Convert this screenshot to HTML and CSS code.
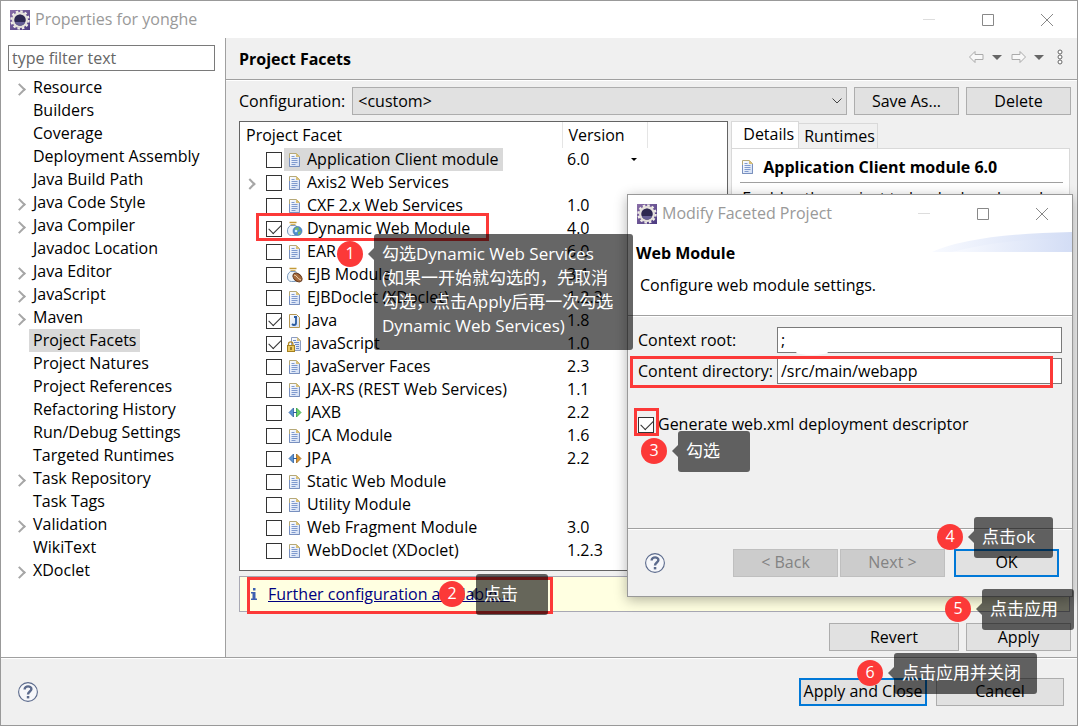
FILE: index.html
```
<!DOCTYPE html>
<html lang="zh-CN">
<head>
	<meta charset="utf-8">
	<title>Properties for yonghe</title>
	<link rel="stylesheet" href="styles.css">
</head>
<body>
	<!-- shared icons -->
	<svg class="sprite" aria-hidden="true">
		<defs>
			<linearGradient id="gPurple" x1="0" y1="0" x2="1" y2="1"><stop offset="0" stop-color="#8a6fa8"/><stop offset="1" stop-color="#4b3a80"/></linearGradient>
			<linearGradient id="gPaper" x1="0" y1="0" x2="1" y2="1"><stop offset="0" stop-color="#fff"/><stop offset="1" stop-color="#cfdcf3"/></linearGradient>
			<linearGradient id="gWave" x1="0" y1="0" x2="1" y2="0"><stop offset="0" stop-color="#f8faff"/><stop offset="1" stop-color="#d3ddf5"/></linearGradient>
		</defs>
		<symbol id="eclipse" viewBox="0 0 20 20">
			<rect width="20" height="20" fill="url(#gPurple)"/>
			<circle cx="10" cy="10" r="8.6" fill="none" stroke="#f1eee8" stroke-width="2.2" stroke-dasharray="2.5 2"/>
			<circle cx="10" cy="10" r="6.8" fill="none" stroke="#e6e2dc" stroke-width="2.400"/>
			<circle cx="10" cy="10" r="5.600" fill="#2d2850"/>
			<path d="M4.800 12h10.400a5.600 5.600 0 0 1-10.400 0z" fill="#665f95"/>
		</symbol>
		<symbol id="doc" viewBox="0 0 16 16">
			<path d="M2.5 1.5h7l3 3v10h-10z" fill="url(#gPaper)" stroke="#b5a878"/>
			<path d="M2.5 6v8.5h10V5" fill="none" stroke="#7890c0"/>
			<path d="M9 1l4 4H9z" fill="#d8bf78"/>
			<path d="M4.500 4.500h3M4.500 6.500h6M4.500 8.500h6M4.500 10.500h6M4.500 12.500h4" stroke="#7f9ace"/>
		</symbol>
		<symbol id="jarweb" viewBox="0 0 16 16">
			<path d="M2.500 1.500h7M3.500 4h5" stroke="#c49a37" stroke-width="1.600"/>
			<path d="M3.500 4.500C1 6 .5 8 .5 10c0 3 1.500 4.500 4 4.500h4c2-1 3-3 3-5 0-2-1-4-3-5z" fill="#edf4fb" stroke="#7d9cbe"/>
			<circle cx="10.500" cy="10" r="4.500" fill="#4d8fce" stroke="#3a6da4" stroke-width=".6"/>
			<path d="M8 7l3-1 1 2-2 2-2-1zM11 11l3-1-1 3-2 1z" fill="#74b965"/>
			<circle cx="9" cy="10" r="1.300" fill="#d6ecfa"/>
		</symbol>
		<symbol id="jarbean" viewBox="0 0 16 16">
			<path d="M2.500 1.500h7M3.500 4h5" stroke="#c49a37" stroke-width="1.600"/>
			<path d="M3.500 4.500C1 6 .5 8 .5 10c0 3 1.500 4.500 4 4.500h4c2-1 3-3 3-5 0-2-1-4-3-5z" fill="#edf4fb" stroke="#7d9cbe"/>
			<ellipse cx="10.500" cy="10.500" rx="5.200" ry="3.600" transform="rotate(42 10.500 10.500)" fill="#a56a3c" stroke="#5f351a"/>
			<path d="M7 8c3 0 3 4 7 5" fill="none" stroke="#f0d3b0"/>
		</symbol>
		<symbol id="java" viewBox="0 0 16 16">
			<path d="M2.500 1.500h7l3 3v10h-10z" fill="url(#gPaper)" stroke="#b59652"/>
			<path d="M9 4v6q0 2-2 2-1 0-2-1M7 4h3" fill="none" stroke="#2b5ba0" stroke-width="1.800"/>
		</symbol>
		<symbol id="jslock" viewBox="0 0 16 16">
			<path d="M4.500 1.500h6l3 3v10h-9z" fill="url(#gPaper)" stroke="#8c9cc0"/>
			<path d="M10 1l4 4h-4z" fill="#d8bf78"/>
			<path d="M6 4.500h3M7 6.500h5M8 8.500h4M9 10.500h3M9 12.500h3" stroke="#6c8bc8"/>
			<path d="M1.500 10V8a2.200 2.200 0 0 1 4.400 0v2" fill="none" stroke="#b18a2a" stroke-width="1.300"/>
			<rect x=".5" y="9.500" width="7" height="6" fill="#eac85e" stroke="#a5801f"/>
			<path d="M4 11v3" stroke="#6b5010" stroke-width="1.300"/>
		</symbol>
		<symbol id="jaxb" viewBox="0 0 16 16">
			<path d="M6.500 3v9L2 7.500z" fill="#5b93d3" stroke="#2f5f9e" stroke-width=".8"/>
			<path d="M9.500 3v9L14 7.500z" fill="#6fd36a" stroke="#2f9a3b" stroke-width=".8"/>
			<path d="M6 7.500h4" stroke="#2f5f9e"/>
		</symbol>
		<symbol id="jpa" viewBox="0 0 16 16">
			<path d="M6.500 3v9L2 7.500z" fill="#5b93d3" stroke="#2f5f9e" stroke-width=".8"/>
			<path d="M9.500 3v9L14 7.500z" fill="#d9962f" stroke="#9a6419" stroke-width=".8"/>
			<path d="M6 7.500h4" stroke="#2f5f9e"/>
		</symbol>
		<symbol id="winMin" viewBox="0 0 14 14"><path d="M1 6.500h12" stroke="#ddd"/></symbol>
		<symbol id="winMax" viewBox="0 0 14 14"><path d="M1.500 1.500h11v11h-11z" fill="none" stroke="#888"/></symbol>
		<symbol id="winClose" viewBox="0 0 14 14"><path d="M1 1l12 12M13 1L1 13" fill="none" stroke="#888"/></symbol>
		<symbol id="help" viewBox="0 0 20 20">
			<circle cx="10" cy="10" r="9.400" fill="#f6f7fa" stroke="#5b6a8c" stroke-width="1.100"/>
			<path d="M6.600 7.600C6.600 3.200 13.600 3.600 13.400 7.200 13.200 9.600 10 9.600 10 12.600" fill="none" stroke="#5b6a8c" stroke-width="2.400"/>
			<rect x="8.800" y="14" width="2.500" height="2.400" fill="#5b6a8c"/>
		</symbol>
		<symbol id="tick" viewBox="0 0 14 14"><path d="M2 7l3.500 3.500L12 3.500" fill="none" stroke="#333" stroke-width="1.500"/></symbol>
	</svg>

	<div class="window">
		<header class="titlebar">
			<svg class="logo"><use href="#eclipse"/></svg>
			<span class="title">Properties for yonghe</span>
			<button class="winbtn" aria-label="Minimize"><svg><use href="#winMin"/></svg></button>
			<button class="winbtn" aria-label="Maximize"><svg><use href="#winMax"/></svg></button>
			<button class="winbtn" aria-label="Close"><svg><use href="#winClose"/></svg></button>
		</header>

		<div class="main">
			<nav class="sidebar">
				<input class="field filter" type="text" placeholder="type filter text" aria-label="Filter">
				<ul class="tree">
					<li class="parent"><span>Resource</span></li>
					<li><span>Builders</span></li>
					<li><span>Coverage</span></li>
					<li><span>Deployment Assembly</span></li>
					<li><span>Java Build Path</span></li>
					<li class="parent"><span>Java Code Style</span></li>
					<li class="parent"><span>Java Compiler</span></li>
					<li><span>Javadoc Location</span></li>
					<li class="parent"><span>Java Editor</span></li>
					<li class="parent"><span>JavaScript</span></li>
					<li class="parent"><span>Maven</span></li>
					<li><span class="selected">Project Facets</span></li>
					<li><span>Project Natures</span></li>
					<li><span>Project References</span></li>
					<li><span>Refactoring History</span></li>
					<li><span>Run/Debug Settings</span></li>
					<li><span>Targeted Runtimes</span></li>
					<li class="parent"><span>Task Repository</span></li>
					<li><span>Task Tags</span></li>
					<li class="parent"><span>Validation</span></li>
					<li><span>WikiText</span></li>
					<li class="parent"><span>XDoclet</span></li>
				</ul>
			</nav>

			<main class="page">
				<div class="pagehead">
					<h1>Project Facets</h1>
					<svg class="navicons" viewBox="0 0 96 16">
						<path d="M1.500 8l5.500-5.500V5.500h8v5H7v3z" fill="#f8f8f8" stroke="#aaa"/>
						<path d="M24 6h10l-5 5z" fill="#666"/>
						<path d="M57.500 8L52 2.500V5.500h-8v5h8v3z" fill="#f8f8f8" stroke="#aaa"/>
						<path d="M66 6h10l-5 5z" fill="#666"/>
						<g fill="#fff" stroke="#666"><circle cx="92" cy="3" r="2"/><circle cx="92" cy="8" r="2"/><circle cx="92" cy="13" r="2"/></g>
					</svg>
				</div>

				<div class="config">
					<label for="conf">Configuration:</label>
					<div class="combo">
						<select id="conf"><option>&lt;custom&gt;</option></select>
						<svg class="chev" viewBox="0 0 10 6"><path d="M.5 .5L5 5 9.500 .5" fill="none" stroke="#444"/></svg>
					</div>
					<button class="btn">Save As...</button>
					<button class="btn">Delete</button>
				</div>

				<div class="facets">
					<div class="facetbox">
						<table>
							<thead>
								<tr><th class="colname">Project Facet</th><th class="colver">Version</th><th></th></tr>
							</thead>
							<tbody>
								<tr><td><label><input type="checkbox"><span class="name selected"><svg><use href="#doc"/></svg>Application Client module</span></label></td><td class="ver">6.0<i class="drop"></i></td><td></td></tr>
								<tr><td class="parent"><label><input type="checkbox"><span class="name"><svg><use href="#doc"/></svg>Axis2 Web Services</span></label></td><td></td><td></td></tr>
								<tr><td><label><input type="checkbox"><span class="name"><svg><use href="#doc"/></svg>CXF 2.x Web Services</span></label></td><td>1.0</td><td></td></tr>
								<tr>
									<td class="anchor">
										<label><input type="checkbox" checked><span class="name"><svg><use href="#jarweb"/></svg>Dynamic Web Module</span></label>
										<div class="mark mark1"></div>
										<div class="note note1"><b>1</b><p>勾选Dynamic Web Services<br>(如果一开始就勾选的，先取消<br>勾选，点击Apply后再一次勾选<br>Dynamic Web Services)</p></div>
									</td>
									<td>4.0</td><td></td>
								</tr>
								<tr><td><label><input type="checkbox"><span class="name"><svg><use href="#doc"/></svg>EAR</span></label></td><td>6.0</td><td></td></tr>
								<tr><td><label><input type="checkbox"><span class="name"><svg><use href="#jarbean"/></svg>EJB Module</span></label></td><td>3.1</td><td></td></tr>
								<tr><td><label><input type="checkbox"><span class="name"><svg><use href="#doc"/></svg>EJBDoclet (XDoclet)</span></label></td><td>1.2.3</td><td></td></tr>
								<tr><td><label><input type="checkbox" checked><span class="name"><svg><use href="#java"/></svg>Java</span></label></td><td>1.8</td><td></td></tr>
								<tr><td><label><input type="checkbox" checked><span class="name"><svg><use href="#jslock"/></svg>JavaScript</span></label></td><td>1.0</td><td></td></tr>
								<tr><td><label><input type="checkbox"><span class="name"><svg><use href="#doc"/></svg>JavaServer Faces</span></label></td><td>2.3</td><td></td></tr>
								<tr><td><label><input type="checkbox"><span class="name"><svg><use href="#doc"/></svg>JAX-RS (REST Web Services)</span></label></td><td>1.1</td><td></td></tr>
								<tr><td><label><input type="checkbox"><span class="name"><svg><use href="#jaxb"/></svg>JAXB</span></label></td><td>2.2</td><td></td></tr>
								<tr><td><label><input type="checkbox"><span class="name"><svg><use href="#doc"/></svg>JCA Module</span></label></td><td>1.6</td><td></td></tr>
								<tr><td><label><input type="checkbox"><span class="name"><svg><use href="#jpa"/></svg>JPA</span></label></td><td>2.2</td><td></td></tr>
								<tr><td><label><input type="checkbox"><span class="name"><svg><use href="#doc"/></svg>Static Web Module</span></label></td><td></td><td></td></tr>
								<tr><td><label><input type="checkbox"><span class="name"><svg><use href="#doc"/></svg>Utility Module</span></label></td><td></td><td></td></tr>
								<tr><td><label><input type="checkbox"><span class="name"><svg><use href="#doc"/></svg>Web Fragment Module</span></label></td><td>3.0</td><td></td></tr>
								<tr><td><label><input type="checkbox"><span class="name"><svg><use href="#doc"/></svg>WebDoclet (XDoclet)</span></label></td><td>1.2.3</td><td></td></tr>
							</tbody>
						</table>
					</div>
					<div class="details">
						<div class="tabs">
							<button class="tab active">Details</button>
							<button class="tab">Runtimes</button>
						</div>
						<div class="tabpanel">
							<h2><svg><use href="#doc"/></svg>Application Client module 6.0</h2>
							<p>Enables the project to be deployed as a Java EE Application Client module.</p>
						</div>
					</div>
				</div>

				<div class="further">
					<svg class="info" viewBox="0 0 6 12"><path d="M2 0h2.500v2.500H2zM0 4h4.500v6.500H6V12H0v-1.500h1.500v-5H0z" fill="#3c5fb0"/></svg>
					<a href="#">Further configuration available...</a>
					<div class="mark mark2"></div>
					<div class="note note2"><b>2</b><p>点击</p></div>
				</div>

				<div class="pagebtns">
					<button class="btn wide">Revert</button>
					<div class="anchor">
						<button class="btn">Apply</button>
						<div class="note note5"><b>5</b><p>点击应用</p></div>
					</div>
				</div>
			</main>
		</div>

		<footer class="footer">
			<button class="help" aria-label="Help"><svg><use href="#help"/></svg></button>
			<div class="anchor">
				<button class="btn default">Apply and Close</button>
				<div class="note note6"><b>6</b><p>点击应用并关闭</p></div>
			</div>
			<button class="btn">Cancel</button>
		</footer>

		<div class="dialog" role="dialog" aria-label="Modify Faceted Project">
			<header class="titlebar">
				<svg class="logo"><use href="#eclipse"/></svg>
				<span class="title">Modify Faceted Project</span>
				<button class="winbtn" aria-label="Minimize"><svg><use href="#winMin"/></svg></button>
				<button class="winbtn" aria-label="Maximize"><svg><use href="#winMax"/></svg></button>
				<button class="winbtn" aria-label="Close"><svg><use href="#winClose"/></svg></button>
			</header>
			<div class="banner">
				<h2>Web Module</h2>
				<p>Configure web module settings.</p>
				<svg class="wave" viewBox="0 0 140 20" preserveAspectRatio="none">
					<path d="M0 20Q40 2 140 0V20z" fill="url(#gWave)"/>
					<path d="M20 20Q70 7 140 6V20z" fill="url(#gWave)"/>
				</svg>
			</div>
			<div class="form">
				<div class="formrow">
					<label for="ctx">Context root:</label>
					<input class="field" id="ctx" type="text" value=";">
					<i class="smear"></i>
				</div>
				<div class="formrow">
					<label for="dir">Content directory:</label>
					<input class="field" id="dir" type="text" value="/src/main/webapp">
					<div class="mark mark3"></div>
				</div>
				<div class="generate">
					<input id="gen" type="checkbox" checked>
					<label for="gen">Generate web.xml deployment descriptor</label>
					<div class="mark mark4"></div>
					<div class="note note3"><b>3</b><p>勾选</p></div>
				</div>
			</div>
			<div class="dlgbtns">
				<button class="help" aria-label="Help"><svg><use href="#help"/></svg></button>
				<button class="btn" disabled>&lt; Back</button>
				<button class="btn" disabled>Next &gt;</button>
				<div class="anchor ok">
					<button class="btn default">OK</button>
					<div class="note note4"><b>4</b><p>点击ok</p></div>
				</div>
			</div>
		</div>
	</div>
</body>
</html>
```
FILE: styles.css
```
*{box-sizing: border-box;}
body{margin: 0; font: 16px/23px "Open Sans", "Noto Sans CJK SC", sans-serif; color: #000;}
button, input, select{font: inherit; color: inherit;}
h1, h2, p, ul{margin: 0; padding: 0;}
.sprite{position: absolute; width: 0; height: 0;}
.anchor{position: relative;}

/* window frame */
.window{position: relative; min-height: 100vh; display: flex; flex-direction: column; border: 1px solid #999; background: #f0f0f0;}
.titlebar{display: flex; align-items: center; height: 37px; padding: 0 7px 0 9px; background: #fff; color: #999;}
.logo{width: 20px; height: 20px; margin-right: 5px;}
.title{flex: 1;}
.winbtn{width: 46px; height: 30px; margin-left: 13px; padding: 0; border: 0; background: none; display: grid; place-items: center;}
.winbtn svg{width: 14px; height: 14px;}
.main{flex: 1; display: flex;}

/* left tree */
.sidebar{width: 225px; padding: 7px 10px 0 7px; background: #fff; border-right: 1px solid #a0a0a0;}
.field{width: 100%; height: 26px; padding: 0 3px; border: 1px solid #7a7a7a; background: #fff; outline: 0;}
.field::placeholder{color: #666; opacity: 1;}
.tree{list-style: none; padding-top: 5px;}
.tree li{position: relative; height: 23px; padding-left: 21px;}
.tree span{display: inline-block; padding: 0 4px;}
.selected{background: #d9d9d9;}
.parent{position: relative;}
.parent::before{content: ""; position: absolute; left: 7px; top: 9px; width: 7px; height: 7px; border: solid #a6a6a6; border-width: 2px 2px 0 0; transform: rotate(45deg);}
td.parent::before{left: 6px; width: 6px; height: 6px;}

/* property page */
.page{flex: 1; min-width: 0;}
.pagehead{display: flex; align-items: center; justify-content: space-between; height: 42px; padding: 2px 13px 0 13px; border-bottom: 1px solid #a0a0a0; box-shadow: 0 1px #fff;}
h1, h2{font-size: 16px; font-weight: bold;}
.navicons{width: 96px; height: 16px; margin-bottom: 6px;}
.config{display: flex; align-items: center; gap: 7px; padding: 7px 6px 6px 13px;}
.combo{position: relative; flex: 1;}
.combo select{display: block; width: 100%; height: 28px; padding: 0 5px; border: 1px solid #adadad; border-radius: 0; background: #e1e1e1; appearance: none;}
.chev{position: absolute; right: 5px; top: 11px; width: 10px; height: 6px;}
.btn{width: 105px; height: 28px; padding: 0; border: 1px solid #adadad; background: #e1e1e1; white-space: nowrap;}
.btn.wide{width: 130px;}
.btn.default{border: 2px solid #0078d7;}
.btn:disabled{border-color: #bfbfbf; background: #ccc; color: #838383;}

/* facet table */
.facets{display: grid; grid-template-columns: 13fr 9fr; gap: 3px; padding: 0 7px 0 13px;}
.facetbox{height: 450px; border: 1px solid #646464; background: #fff;}
table{width: 100%; border-collapse: collapse; table-layout: fixed;}
th{height: 26px; padding: 0 6px; border-right: 1px solid #e5e5e5; font-weight: normal; text-align: left;}
th:last-child{border: 0;}
.colname{width: 322px;}
.colver{width: 85px;}
td{height: 23px; padding: 0 5px;}
td:first-child{padding-left: 26px;}
td label{display: flex; align-items: center; gap: 2px; height: 23px;}
.name{display: flex; align-items: center; height: 23px; padding: 0 4px 0 3px; white-space: nowrap;}
.name svg{width: 16px; height: 16px; margin-right: 4px;}
input[type=checkbox]{position: relative; flex: none; width: 16px; height: 16px; margin: 0; border: 1px solid #333; background: #fff; appearance: none;}
input[type=checkbox]:checked::after{content: ""; position: absolute; left: 2px; top: 2px; width: 11px; height: 6px; border: solid #333; border-width: 0 0 1px 1px; transform: rotate(-45deg);}
.ver{position: relative;}
.drop{position: absolute; left: 69px; top: 10px; border: 3px solid transparent; border-top-color: #000;}

/* details tabs */
.details{min-width: 0; display: flex; flex-direction: column;}
.tabs{display: flex; align-items: flex-end;}
.tab{height: 25px; padding: 0 2px 0 5px; border: 1px solid #d9d9d9; border-width: 1px 1px 0 0; background: #f0f0f0;}
.tab.active{height: 27px; padding: 0 4px 2px 11px; border-left-width: 1px; background: #fff;}
.tabpanel{flex: 1; padding: 8px 6px 0 8px; border: 1px solid #d9d9d9; background: #fff; overflow: hidden; white-space: nowrap;}
.tabpanel h2{display: flex; align-items: center; height: 26px; padding-bottom: 5px; border-bottom: 1px solid #a0a0a0;}
.tabpanel svg{width: 16px; height: 16px; margin-right: 7px;}
.tabpanel p{padding: 4px 2px;}

/* yellow bar */
.further{position: relative; display: flex; align-items: center; height: 36px; margin: 5px 7px 11px 13px; padding-left: 11px; border: 1px solid #a8a8b4; background: #ffffe1;}
.info{width: 6px; height: 12px; margin-right: 11px;}
.further a{color: #000080;}
.pagebtns{display: flex; justify-content: flex-end; gap: 7px; padding: 0 6px;}

.footer{display: flex; align-items: center; gap: 9px; height: 68px; padding: 0 13px 0 17px; border-top: 1px solid #a0a0a0; box-shadow: inset 0 1px #fff;}
.footer .btn{width: 128px;}
.help{width: 20px; height: 20px; margin-right: auto; padding: 0; border: 0; background: none;}
.help svg{display: block; width: 20px; height: 20px;}

/* wizard on top of the page */
.dialog{position: absolute; z-index: 5; left: 626px; right: 4px; top: 193px; border: 1px solid #999; background: #f0f0f0; box-shadow: 0 3px 12px rgba(0,0,0,.3);}
.banner{position: relative; height: 84px; padding: 10px 8px; border-bottom: 1px solid #a0a0a0; background: #fff; box-shadow: 0 1px #fff;}
.banner p{padding: 9px 4px;}
.wave{position: absolute; right: 0; top: 0; width: 140px; height: 20px;}
.form{height: 212px; padding: 11px 10px 0;}
.formrow{position: relative; display: flex; align-items: center; margin-bottom: 5px;}
.formrow label{width: 139px; flex: none;}
.smear{position: absolute; left: 158px; top: 22px; width: 32px; height: 6px; border-radius: 50%; background: #fff;}
.generate{position: relative; display: flex; align-items: center; gap: 4px; margin-top: 29px;}
.dlgbtns{display: flex; align-items: center; gap: 2px; height: 68px; padding: 0 13px 0 17px; border-top: 1px solid #a0a0a0; box-shadow: inset 0 1px #fff;}
.ok{margin-left: 7px;}

/* step marks */
.mark{position: absolute; z-index: 2; border: 3px solid #fc3938; pointer-events: none;}
.mark1{left: 16px; top: -4px; width: 233px; height: 28px;}
.mark2{left: 7px; top: 0; width: 306px; height: 37px;}
.mark3{left: -8px; right: 9px; top: -2px; height: 32px;}
.mark4{left: -4px; top: -5px; width: 25px; height: 28px;}
.note{position: absolute; z-index: 10; display: flex; align-items: flex-start; gap: 11px; font-size: 17px; line-height: 24px; white-space: nowrap; color: #fff;}
.note b{width: 26px; height: 26px; margin-top: 7px; border-radius: 50%; background: #fc3938; font-size: 16px; font-weight: normal; text-align: center;}
.note p{position: relative; min-width: 72px; padding: 8px 16px 9px 8px; border-radius: 3px; background: rgba(0,0,0,.6);}
.note p::before{content: ""; position: absolute; left: -6px; top: 14px; border: solid transparent; border-width: 6px 6px 6px 0; border-right-color: rgba(0,0,0,.6);}
.note1{left: 97px; top: 17px;}
.note1 p{min-width: 259px; padding-bottom: 12px;}
.note2{left: 199px; top: -3px;}
.note3{left: 3px; top: 18px;}
.note4{right: 6px; bottom: 19px;}
.note4 p{min-width: 79px;}
.note5{right: -3px; bottom: 21px;}
.note6{left: 58px; bottom: 12px;}
```
